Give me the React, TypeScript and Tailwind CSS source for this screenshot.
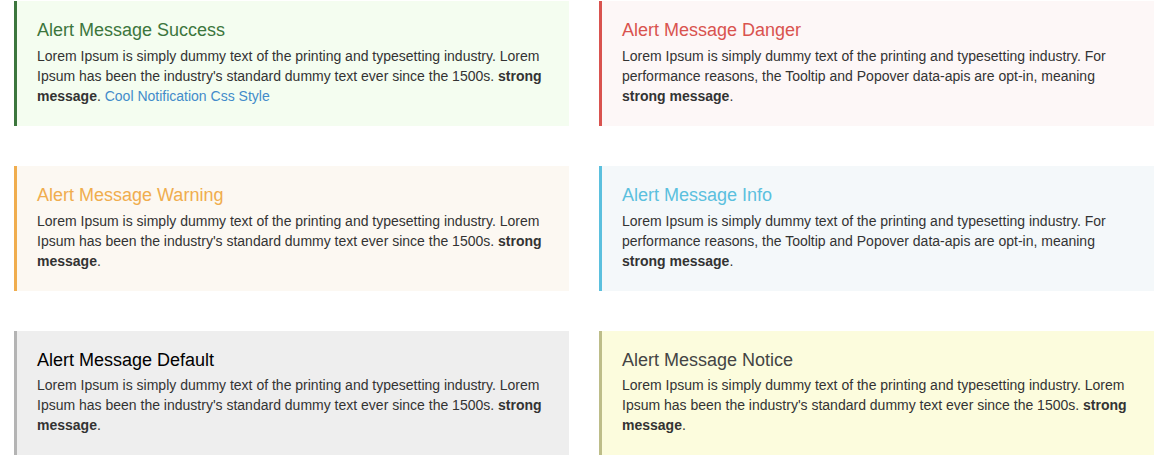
import React from "react";

type Alert = {
  title: string;
  bg: string;
  border: string;
  titleColor: string;
  body: React.ReactNode;
};

const lorem1 = (
  <>
    Lorem Ipsum is simply dummy text of the printing and typesetting industry. Lorem Ipsum has been the
    industry's standard dummy text ever since the 1500s. <strong className="font-bold">strong message</strong>.
  </>
);

const lorem2 = (
  <>
    Lorem Ipsum is simply dummy text of the printing and typesetting industry. For performance reasons, the
    Tooltip and Popover data-apis are opt-in, meaning <strong className="font-bold">strong message</strong>.
  </>
);

function Card({ a }: { a: Alert }) {
  return (
    <div className={`border-l-[3px] border-solid p-5 ${a.bg} ${a.border}`}>
      <h4 className={`m-0 mb-[5px] text-[18px] leading-[1.1] font-normal ${a.titleColor}`}>{a.title}</h4>
      <p className="m-0 text-[14px] leading-[20px] text-[#333]">{a.body}</p>
    </div>
  );
}

export default function App() {
  const alerts: Alert[] = [
    {
      title: "Alert Message Success",
      bg: "bg-[#f4fdf0]",
      border: "border-[#3c763d]",
      titleColor: "text-[#3c763d]",
      body: (
        <>
          Lorem Ipsum is simply dummy text of the printing and typesetting industry. Lorem Ipsum has been the
          industry's standard dummy text ever since the 1500s. <strong className="font-bold">strong message</strong>.{" "}
          <a href="#" className="text-[#428bca] no-underline">
            Cool Notification Css Style
          </a>
        </>
      ),
    },
    {
      title: "Alert Message Danger",
      bg: "bg-[#fdf7f7]",
      border: "border-[#d9534f]",
      titleColor: "text-[#d9534f]",
      body: lorem2,
    },
    {
      title: "Alert Message Warning",
      bg: "bg-[#fcf8f2]",
      border: "border-[#f0ad4e]",
      titleColor: "text-[#f0ad4e]",
      body: lorem1,
    },
    {
      title: "Alert Message Info",
      bg: "bg-[#f4f8fa]",
      border: "border-[#5bc0de]",
      titleColor: "text-[#5bc0de]",
      body: lorem2,
    },
    {
      title: "Alert Message Default",
      bg: "bg-[#eeeeee]",
      border: "border-[#b4b4b4]",
      titleColor: "text-[#000000]",
      body: lorem1,
    },
    {
      title: "Alert Message Notice",
      bg: "bg-[#fcfcdd]",
      border: "border-[#bdbd89]",
      titleColor: "text-[#444444]",
      body: lorem1,
    },
  ];

  return (
    <div
      className="w-[1155px] h-[460px] overflow-hidden bg-white pl-[14px] pt-[1px]"
      style={{ fontFamily: '"Liberation Sans", Arial, sans-serif' }}
    >
      <div className="grid grid-cols-[555px_555px] gap-x-[30px] gap-y-[40px]">
        {alerts.map((a) => (
          <Card key={a.title} a={a} />
        ))}
      </div>
    </div>
  );
}
